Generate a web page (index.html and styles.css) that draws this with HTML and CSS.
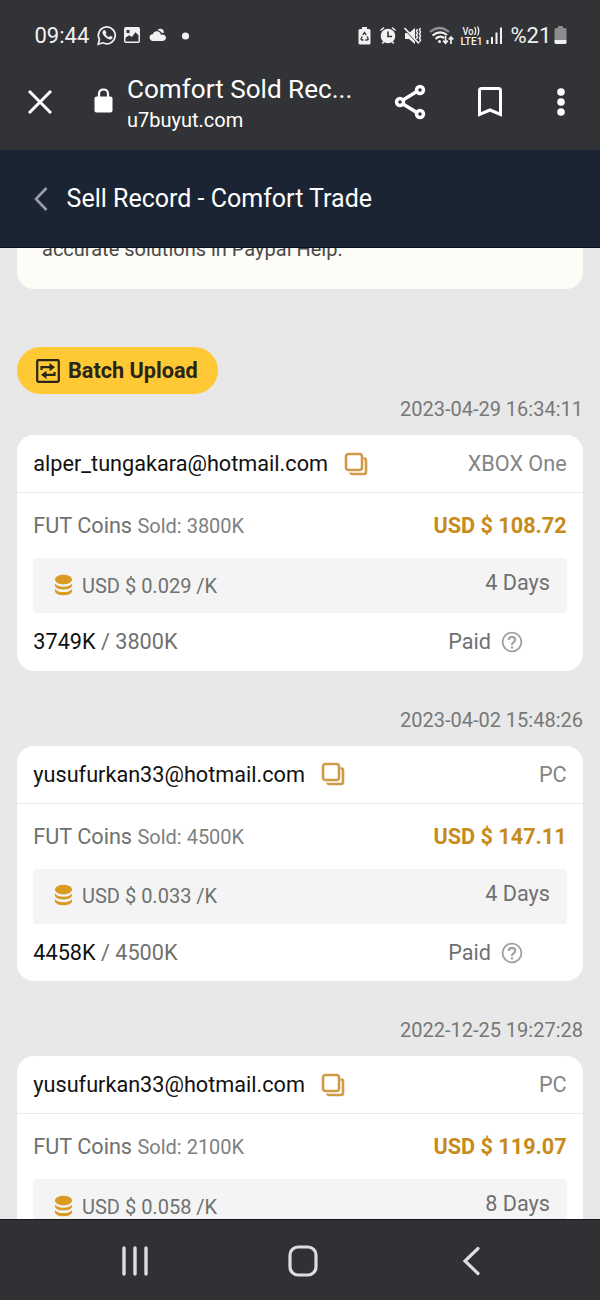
FILE: index.html
```html
<!DOCTYPE html>
<html lang="en">
<head>
<meta charset="utf-8">
<title>Sell Record - Comfort Trade</title>
<link rel="stylesheet" href="styles.css">
</head>
<body>
<svg class="defs" aria-hidden="true">
  <symbol id="copy" viewBox="0 0 24 24"><g fill="none" stroke="#cf9b48" stroke-width="2.600"><rect x="2" y="2" width="16" height="16" rx="2.500"/><path d="M19.500 6.500h.5q2 0 2 2V20q0 2-2 2H8.500q-2 0-2-1.500"/></g></symbol>
  <symbol id="coins" viewBox="0 0 18 22"><g fill="#db9a23"><ellipse cx="9" cy="5.600" rx="8.600" ry="4.800"/><path d="M.4 9.600q2 3.100 8.600 3.100t8.600-3.100v2.200q-1 3.700-8.600 3.700t-8.600-3.700z"/><path d="M.4 15q2 3.100 8.600 3.100t8.600-3.100v2.500q-1 3.700-8.600 3.700t-8.600-3.700z"/></g></symbol>
  <symbol id="help" viewBox="0 0 22 22"><g fill="none" stroke="#a2a2a2" stroke-width="1.900"><circle cx="11" cy="11" r="9.400"/><path d="M7.800 9q0-3.200 3.200-3.200t3.200 3q0 1.500-1.800 2.600-1.400.8-1.400 2.600" stroke-width="2.200"/></g><rect x="9.900" y="15.300" width="2.200" height="2.200" fill="#a2a2a2"/></symbol>
</svg>
<header class="status">
  <span class="clock">09:44</span>
  <svg class="notices" width="96" height="24" viewBox="0 0 96 24">
    <g fill="none" stroke="#f1f1f1" stroke-width="1.700"><path d="M2.200 20.200l1.300-4.600A8.400 8.400 0 1 1 6.800 18.800z"/></g>
    <path fill="#f1f1f1" d="M7.300 6.500q1-1 2 0l1 2q.2.600-.8 1.500 1.200 2.300 3.300 3.200l1.200-1.200q.5-.4 2.200.7.900.5 0 1.700-1.500 2-5 .1-3.700-2.300-4.700-5-.4-1.700.8-3z"/>
    <path fill="#f1f1f1" fill-rule="evenodd" d="M30 3h12q2 0 2 2v12q0 2-2 2H30q-2 0-2-2V5q0-2 2-2zM29.500 13.800v3.700h13v-6.300l-3-3-3.700 4.800-2.600-1.700zM30.500 6v3h3V6z"/>
    <path fill="#f1f1f1" d="M57 17q-3-.3-3.500-3.200.1-3.200 3.200-3.500Q58 7 61 7.200q3.200.3 4 3.600.4-.3 1-.3 3.600 0 4 3.300-.2 3-3.600 3.200zM61.500 6q2-2 4.700-.9 2 1.300 1.700 4-.9-.6-2.300-.3Q64.300 6.500 61.500 6z"/>
    <circle cx="89.500" cy="12" r="3.600" fill="#f1f1f1"/>
  </svg>
  <svg class="signals" width="150" height="26" viewBox="0 0 150 26">
    <g fill="#f1f1f1">
      <path d="M4 3h5v2h2q1.500 0 1.500 1.500V19q0 1.500-1.500 1.500H2Q.5 20.500.5 19V6.500Q.5 5 2 5h2z"/>
      <circle cx="30" cy="12" r="7.300"/><path d="M22 6l3.500-3 1 1-3.500 3zM38 6l-3.500-3-1 1L37 7zM23.700 19l2-2 1 1-2 2zM36.300 19l-2-2-1 1 2 2z"/>
      <path d="M47 9h4l6-5v16l-6-5h-4z"/>
    </g>
    <path d="M4.800 11l1.700-2.600L8.200 11M9.200 12.500l1 2.500-1.200 1H7.300M5.500 16H4l-1-1.200 1.200-2.300" fill="none" stroke="#323336" stroke-width="1.300"/>
    <path d="M30 7.500v5h4" fill="none" stroke="#323336" stroke-width="1.600"/>
    <path d="M47 5.500l13 14" stroke="#323336" stroke-width="1.500"/><path d="M46.500 4l14.500 15.500" stroke="#f1f1f1" stroke-width="1.800"/>
    <path d="M59.500 5l-1 2 1 2-1 2 1 2-1 2M62.500 4l-1 2 1 2-1 2 1 2-1 2 1 2-1 2" fill="none" stroke="#f1f1f1" stroke-width="1.500"/>
    <g fill="none" stroke-width="2.200"><path d="M72 8q9.500-8 19 0" stroke="#8b8c8e"/><path d="M74.500 11.500q7.500-6 14.500-.5M77.500 14.800q4.500-3.700 8.500-.8" stroke="#f1f1f1"/><path d="M87.500 12v7m-2.300-2.300l2.300 2.500 2.300-2.500M93 20v-7m-2.300 2.500L93 13l2.300 2.500" stroke="#f1f1f1" stroke-width="1.700"/></g><circle cx="81.500" cy="17.500" r="1.500" fill="#f1f1f1"/>
    <text x="104.500" y="11" class="lte" textLength="11" lengthAdjust="spacingAndGlyphs">Vo</text>
    <path d="M116.500 3q2.500 4 0 8M119.500 2.500q2.500 4.500 0 9" fill="none" stroke="#f1f1f1" stroke-width="1.300"/>
    <text x="102.500" y="21" class="lte" textLength="22" lengthAdjust="spacingAndGlyphs">LTE1</text>
    <path d="M129.500 16v4M134 13v7M138.500 8.500V20M143 3.500V20" stroke="#f1f1f1" stroke-width="2"/>
  </svg>
  <span class="percent">%21</span>
  <svg class="battery" width="13" height="19" viewBox="0 0 13 19"><path d="M4 0h5v2h2q1.500 0 1.500 1.500V14H.5V3.500Q.5 2 2 2h2z" fill="#8b8c8e"/><path d="M.5 14h12v2.500Q12.500 18 11 18H2Q.5 18 .5 16.500z" fill="#f1f1f1"/></svg>
</header>
<section class="browser">
  <svg class="close" width="24" height="24" viewBox="0 0 24 24"><path d="M1 1l22 22M23 1L1 23" stroke="#fff" stroke-width="3"/></svg>
  <svg class="lock" width="19" height="25" viewBox="0 0 19 25"><rect x=".5" y="8.500" width="18" height="16" rx="2" fill="#fff"/><path d="M5 10V6q0-4.500 4.500-4.500T14 6v4" fill="none" stroke="#fff" stroke-width="2.200"/></svg>
  <div class="site"><div class="page-title">Comfort Sold Rec...</div><div class="domain">u7buyut.com</div></div>
  <svg class="share" width="32" height="36" viewBox="0 0 32 36"><g fill="none" stroke="#fff" stroke-width="3.400"><path d="M9 16l13-8M9 20l13 8"/><circle cx="6" cy="18" r="3.500"/><circle cx="26" cy="6" r="3.500"/><circle cx="26" cy="30" r="3.500"/></g></svg>
  <svg class="bookmark" width="26" height="32" viewBox="0 0 26 32"><path d="M2.500 28.500V4.500q0-2 2-2h17q2 0 2 2v24L13 24z" fill="none" stroke="#fff" stroke-width="3"/></svg>
  <svg class="more" width="8" height="28" viewBox="0 0 8 28"><g fill="#fff"><circle cx="4" cy="4" r="3.800"/><circle cx="4" cy="14" r="3.800"/><circle cx="4" cy="24" r="3.800"/></g></svg>
</section>
<section class="heading">
  <svg width="14" height="24" viewBox="0 0 14 24"><path d="M12.500 1L2 12l10.500 11" fill="none" stroke="#9a9da1" stroke-width="2.600"/></svg>
  <h1>Sell Record - Comfort Trade</h1>
</section>
<main>
  <div class="notice">accurate solutions in Paypal Help.</div>
  <button class="batch"><svg width="24" height="24" viewBox="0 0 24 24"><rect x="1.200" y="1.200" width="21.600" height="21.600" rx="1" fill="none" stroke="#29251a" stroke-width="2.200"/><g stroke="#29251a" stroke-width="2.200" fill="none"><path d="M5.500 11V8.200H16M18.500 13v2.800H8"/></g><path fill="#29251a" d="M13.500 4l5.500 4.200-5.500 4.100zM10.500 11.700L5 15.800l5.500 4.200z"/></svg><span>Batch Upload</span></button>
  <time class="first">2023-04-29 16:34:11</time>
  <article>
    <div class="account"><span class="email">alper_tungakara@hotmail.com</span><svg><use href="#copy"/></svg><span class="platform">XBOX One</span></div>
    <div class="sold"><span>FUT Coins <small>Sold: 3800K</small></span><strong>USD $ 108.72</strong></div>
    <div class="rate"><svg><use href="#coins"/></svg><span>USD $ 0.029 /K</span><span class="days">4 Days</span></div>
    <div class="progress"><span><b>3749K</b> / 3800K</span><span class="paid">Paid</span><svg><use href="#help"/></svg></div>
  </article>
  <time>2023-04-02 15:48:26</time>
  <article>
    <div class="account"><span class="email">yusufurkan33@hotmail.com</span><svg><use href="#copy"/></svg><span class="platform">PC</span></div>
    <div class="sold"><span>FUT Coins <small>Sold: 4500K</small></span><strong>USD $ 147.11</strong></div>
    <div class="rate"><svg><use href="#coins"/></svg><span>USD $ 0.033 /K</span><span class="days">4 Days</span></div>
    <div class="progress"><span><b>4458K</b> / 4500K</span><span class="paid">Paid</span><svg><use href="#help"/></svg></div>
  </article>
  <time>2022-12-25 19:27:28</time>
  <article>
    <div class="account"><span class="email">yusufurkan33@hotmail.com</span><svg><use href="#copy"/></svg><span class="platform">PC</span></div>
    <div class="sold"><span>FUT Coins <small>Sold: 2100K</small></span><strong>USD $ 119.07</strong></div>
    <div class="rate"><svg><use href="#coins"/></svg><span>USD $ 0.058 /K</span><span class="days">8 Days</span></div>
  </article>
</main>
<nav>
  <svg width="28" height="30" viewBox="0 0 28 30"><path d="M3 2v26M14 2v26M25 2v26" stroke="#dedede" stroke-width="3.400" stroke-linecap="round"/></svg>
  <svg width="32" height="32" viewBox="0 0 32 32"><rect x="3" y="2" width="26" height="28" rx="8" fill="none" stroke="#dedede" stroke-width="3.200"/></svg>
  <svg width="20" height="30" viewBox="0 0 20 30"><path d="M16 2.500L3 15l13 12.500" fill="none" stroke="#dedede" stroke-width="3.200" stroke-linecap="round"/></svg>
</nav>
</body>
</html>
```
FILE: styles.css
```css
* { box-sizing: border-box; }
body { margin: 0; width: 600px; height: 1300px; overflow: hidden; display: flex; flex-direction: column; background: #e8e8e8; font-family: Roboto, "Liberation Sans", sans-serif; color: #707070; white-space: nowrap; }
svg { display: block; flex: none; }
.defs { width: 0; height: 0; position: absolute; }
.status { height: 70px; flex: none; display: flex; align-items: center; background: #323336; color: #f1f1f1; padding: 1px 0 0 34.5px; }
.clock { width: 61px; font-size: 22px; line-height: 70px; }
.notices { width: 96px; margin-top: 1px; }
.signals { margin: 2px 0 0 166.5px; }
.lte { font-size: 10px; font-weight: 500; fill: #f1f1f1; }
.percent { width: 41px; margin-left: 2.500px; font-size: 22px; }
.battery { margin-left: 2px; }
.browser { height: 80px; flex: none; display: flex; background: #323336; color: #fff; padding-left: 28px; }
.close { margin-top: 20px; }
.lock { margin: 18px 0 0 42px; }
.site { width: 267px; padding-left: 14px; }
.page-title { font-size: 26.1px; line-height: 38px; }
.domain { font-size: 20px; line-height: 25px; }
.share { margin-top: 13.5px; margin-left: 14px; }
.bookmark { margin: 16px 0 0 51px; }
.more { margin: 18px 0 0 54px; }
.heading { height: 98px; flex: none; display: flex; align-items: center; background: #1b2432; border-bottom: 1px solid #090f1a; padding-left: 34px; color: #fff; }
h1 { margin: 0 0 0 18.600px; font-size: 25px; font-weight: 400; }
main { height: 971px; flex: none; overflow: hidden; padding: 0 17px; }
.notice { height: 41px; border-radius: 0 0 17px 17px; background: #fdfcf7; padding-left: 25px; font-size: 20px; line-height: 2px; color: #4b4b4b; }
.batch { width: 201px; height: 47px; margin: 58px 0 0; padding: 0 0 0 19px; border: 0; border-radius: 24px; display: flex; align-items: center; gap: 8px; background: #ffc936; color: #29251a; font: 700 21.67px Roboto, sans-serif; }
time { display: block; height: 75px; padding-top: 33px; font-size: 20px; line-height: 32px; text-align: right; color: #777; }
time.first { height: 41.1px; padding: 0; line-height: 31px; }
article { height: 235.7px; border-radius: 17px; background: #fff; font-size: 21.67px; }
.account { height: 58px; display: flex; align-items: center; border-bottom: 1.5px solid #ebebeb; padding: 0 16.300px; }
.email { color: #111; }
.account svg { width: 24px; height: 24px; margin-left: 16px; }
.platform { margin-left: auto; color: #858585; }
.sold { height: 65px; display: flex; align-items: center; justify-content: space-between; padding: 0 16.300px; }
small { font-size: 20px; color: #808080; }
strong { color: #c78b1c; font-weight: 700; }
.rate { height: 55px; margin: 0 16px; border-radius: 4px; background: #f4f4f4; display: flex; align-items: center; padding: 0 17px 0 21px; font-size: 20px; }
.rate svg { width: 19px; height: 22px; margin: -2px 9px 0 0; }
.days { margin-left: auto; font-size: 21.67px; padding-bottom: 6px; }
.progress { height: 57px; display: flex; align-items: center; padding: 0 60px 0 16.300px; }
.progress b { color: #111; font-weight: 400; }
.paid { margin-left: auto; margin-right: 10px; }
.progress svg { width: 22px; height: 22px; margin-top: 1px; }
nav { height: 81px; flex: none; background: #303135; border-top: 1px solid #17181a; display: flex; align-items: center; padding: 2px 0 0 121px; gap: 138px; }
nav svg:last-child { margin-left: 4.5px; }
```
